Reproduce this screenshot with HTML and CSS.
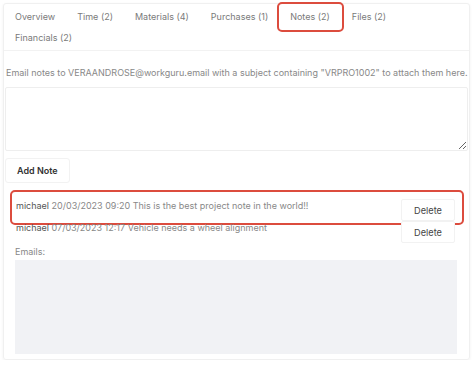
FILE: index.html
```html
<!DOCTYPE html>
<html lang="en">
<head>
    <meta charset="UTF-8">
    <meta name="viewport" content="width=device-width, initial-scale=1.0">
    <title>Project Notes</title>
    <link rel="stylesheet" href="styles.css">
</head>
<body>
    <div class="card">
        <ul class="tabs">
            <li class="tab">Overview</li>
            <li class="tab">Time (2)</li>
            <li class="tab">Materials (4)</li>
            <li class="tab">Purchases (1)</li>
            <li class="tab active">Notes (2)</li>
            <li class="tab">Files (2)</li>
            <li class="tab">Financials (2)</li>
        </ul>

        <div class="notes-pane">
            <p class="hint">Email notes to VERAANDROSE@workguru.email with a subject containing "VRPRO1002" to attach them here.</p>

            <textarea class="note-input"></textarea>

            <button class="add-button">Add Note</button>

            <div class="note-list">
                <div class="note highlighted">
                    <div class="note-text"><span class="author">michael</span> 20/03/2023 09:20 This is the best project note in the world!!</div>
                    <button class="delete-button">Delete</button>
                </div>
                <div class="note">
                    <div class="note-text"><span class="author">michael</span> 07/03/2023 12:17 Vehicle needs a wheel alignment</div>
                    <button class="delete-button">Delete</button>
                </div>

                <div class="emails-label">Emails:</div>
                <div class="emails-box"></div>
            </div>
        </div>
    </div>
</body>
</html>
```

FILE: styles.css
```css
body {
    margin: 0;
    background-color: #fff;
    font-family: Inter, "Open Sans", sans-serif;
    font-size: 9px;
    color: #888;
}

.card {
    margin: 3px 4px 0 3px;
    height: 357px;
    border: 1px solid #f0f0f0;
    border-radius: 3px;
    box-shadow: 0 1px 3px rgba(0, 0, 0, 0.06);
    box-sizing: border-box;
}

.tabs {
    list-style: none;
    margin: 0;
    padding: 2px 0;
    display: flex;
    flex-wrap: wrap;
    border-bottom: 1px solid #f2f2f2;
}

.tab {
    padding: 0 11px;
    line-height: 21px;
    font-size: 9px;
    color: #7a7a7a;
    position: relative;
}

.tab.active::after {
    content: "";
    position: absolute;
    top: -4px;
    bottom: -5px;
    left: -2px;
    right: -3px;
    border: 2px solid #dc4c3e;
    border-radius: 5px;
}

.notes-pane {
    padding: 0 1px;
}

.hint {
    margin: 14px 0 0 1px;
    line-height: 16px;
    color: #888;
    white-space: nowrap;
}

.note-input {
    display: block;
    width: 463px;
    height: 64px;
    margin-top: 6px;
    border: 1px solid #eee;
    border-radius: 2px;
    box-sizing: border-box;
    font-family: inherit;
}

.add-button {
    margin-top: 7px;
    padding: 0 11px;
    height: 25px;
    background: #fff;
    border: 1px solid #f2f2f2;
    border-radius: 3px;
    font-family: inherit;
    font-size: 9px;
    font-weight: 600;
    color: #333;
}

.note-list {
    padding: 0 10px;
    margin-top: 14px;
}

.note {
    position: relative;
    display: flex;
    justify-content: space-between;
    align-items: flex-start;
    height: 22px;
    margin-left: 1px;
}

.note-text {
    padding-top: 1px;
    line-height: 16px;
}

.note.highlighted {
    margin-top: 8px;
}

.note.highlighted::after {
    content: "";
    position: absolute;
    top: -7px;
    left: -6px;
    right: -6px;
    bottom: -6px;
    border: 2px solid #dc4c3e;
    border-radius: 5px;
}

.author {
    color: #555;
}

.delete-button {
    margin-top: 2px;
    margin-right: 3px;
    width: 54px;
    height: 22px;
    background: #fff;
    border: 1px solid #f2f2f2;
    border-radius: 2px;
    font-family: inherit;
    font-size: 9.2px;
    color: #444;
}

.emails-label {
    margin-top: 3px;
    line-height: 16px;
    color: #888;
}

.emails-box {
    margin-top: 0;
    height: 94px;
    background-color: #f1f2f5;
    margin-right: 1px;
}
```
